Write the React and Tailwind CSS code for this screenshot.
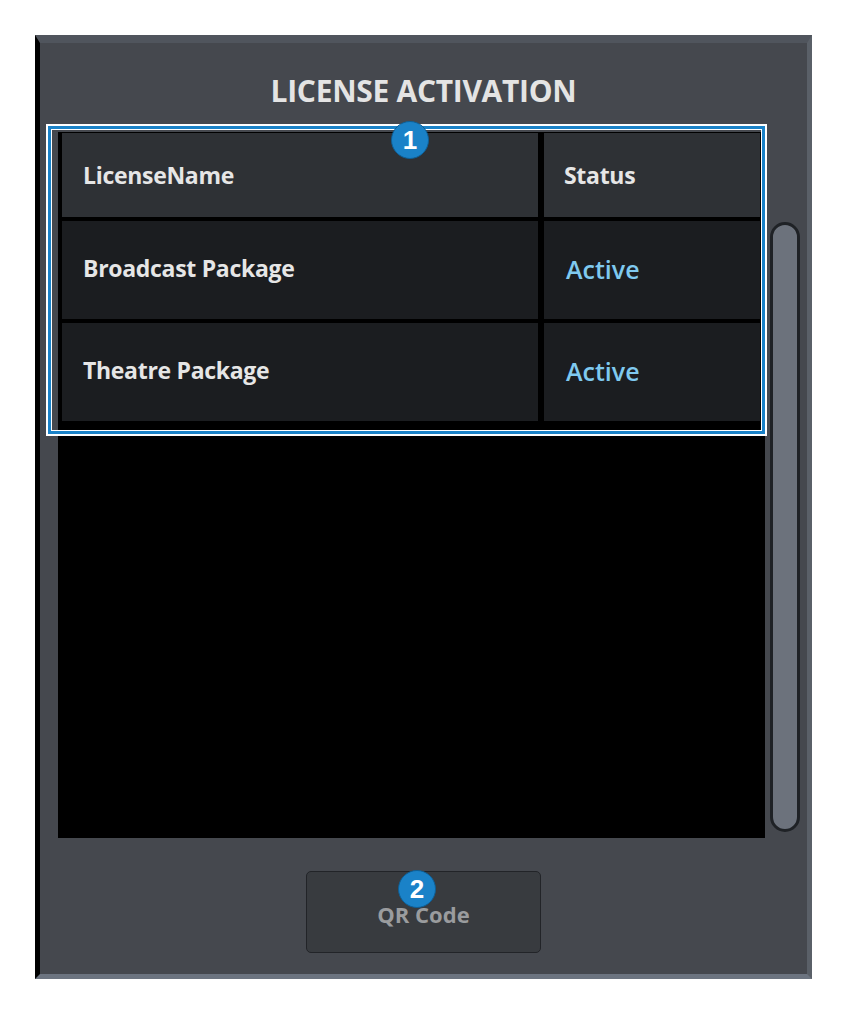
export default function App() {
  const rows = [
    ["Broadcast Package", "Active"],
    ["Theatre Package", "Active"],
  ];
  const Badge = ({ n }) => (
    <div className="absolute w-[38px] h-[38px] rounded-full bg-[#1a82c8] border border-[#0e5f96] text-white flex items-center justify-center text-[26px] font-bold leading-none" style={{ fontFamily: "Liberation Sans, sans-serif" }}>
      {n}
    </div>
  );
  return (
    <div className="w-[848px] h-[1015px] bg-white relative" style={{ fontFamily: "'Open Sans', 'Noto Sans', sans-serif" }}>
      <div className="absolute left-[35px] top-[35px] w-[777px] h-[944px] bg-[#45484e] border-l-[5px] border-l-black border-t-[8px] border-t-[#50555d] border-r-[5px] border-r-[#5a6068] border-b-[5px] border-b-[#6c7480] flex flex-col">
        <div className="h-[89px] flex items-center justify-center text-[30px] font-bold text-[#e4e4e4] pt-[6px] tracking-[-0.3px]">LICENSE ACTIVATION</div>
        <div className="flex h-[706px]">
          <div className="ml-[18px] w-[707px] bg-black relative">
            <div className="flex flex-col gap-[4px] p-[1px] pl-[4px] pr-[5px]">
              <div className="flex gap-[6px] h-[84px]">
                <div className="w-[476px] bg-[#2e3135] flex items-center pl-[21px] text-[23px] font-bold text-[#e6e6e6] tracking-[-0.3px]">LicenseName</div>
                <div className="flex-1 bg-[#2e3135] flex items-center pl-[20px] text-[23px] font-bold text-[#e6e6e6] tracking-[-0.3px]">Status</div>
              </div>
              {rows.map(([n, s]) => (
                <div key={n} className="flex gap-[6px] h-[98px]">
                  <div className="w-[476px] bg-[#1b1d20] flex items-center pl-[21px] pb-[4px] text-[23px] font-bold text-[#e6e6e6] tracking-[-0.3px]">{n}</div>
                  <div className="flex-1 bg-[#1b1d20] flex items-center pl-[22px] text-[25px] font-semibold text-[#7fc9ef]">{s}</div>
                </div>
              ))}
            </div>
            <div className="absolute left-[-12px] top-[-8px] w-[721px] h-[312px] border-2 border-white">
              <div className="w-full h-full border-[3px] border-[#1a82c8]">
                <div className="w-full h-full border border-white"></div>
              </div>
            </div>
          </div>
          <div className="ml-[5px] mt-[90px] mb-[6px] w-[30px] rounded-full bg-[#6c727c] border-[3px] border-[#1f2226]"></div>
        </div>
        <div className="flex-1 flex justify-start pl-[266px] pt-[33px]">
          <div className="w-[235px] h-[82px] bg-[#383b3f] border border-[#222428] rounded-[5px] flex items-center justify-center pt-[4px] text-[22px] font-bold text-[#9a9c9e]">QR Code</div>
        </div>
        <div className="absolute left-[351px] top-[78px]"><Badge n="1" /></div>
        <div className="absolute left-[358px] top-[827px]"><Badge n="2" /></div>
      </div>
    </div>
  );
}
